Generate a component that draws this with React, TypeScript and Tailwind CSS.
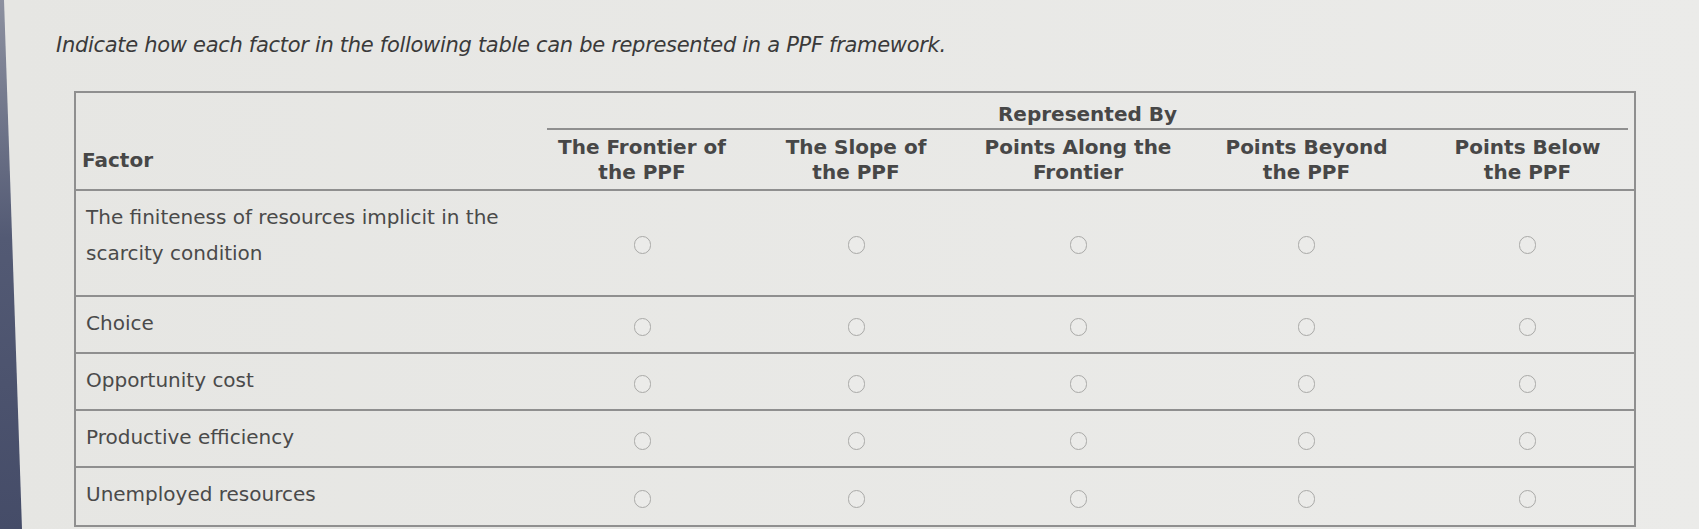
import React from "react";

const cols = [
  ["The Frontier of", "the PPF"],
  ["The Slope of", "the PPF"],
  ["Points Along the", "Frontier"],
  ["Points Beyond", "the PPF"],
  ["Points Below", "the PPF"],
];

const rows: { label: string[]; tall?: boolean }[] = [
  { label: ["The finiteness of resources implicit in the", "scarcity condition"], tall: true },
  { label: ["Choice"] },
  { label: ["Opportunity cost"] },
  { label: ["Productive efficiency"] },
  { label: ["Unemployed resources"] },
];

function Radio() {
  return (
    <span className="block w-[17px] h-[18px] rounded-full border-[1.5px] border-[#a9a9a7] bg-[#ebebe9]" />
  );
}

export default function App() {
  return (
    <div className="relative w-[1699px] h-[529px] overflow-hidden bg-gradient-to-r from-[#e6e6e3] to-[#ebebe9] flex font-['DejaVu_Sans','Liberation_Sans',sans-serif] text-[#474747]">
      <svg width="24" height="529" className="flex-none" viewBox="0 0 24 529">
        <defs>
          <linearGradient id="bz" x1="0" y1="0" x2="0" y2="1">
            <stop offset="0" stopColor="#8d91a0" />
            <stop offset="0.45" stopColor="#535a74" />
            <stop offset="1" stopColor="#454c68" />
          </linearGradient>
        </defs>
        <polygon points="0,0 4,0 22,529 0,529" fill="url(#bz)" />
      </svg>
      <div className="flex flex-col pl-[32px] pt-[32px]">
        <div className="italic text-[21px] leading-[26px] text-[#3a3a3a] tracking-[-0.3px]">
          Indicate how each factor in the following table can be represented in a PPF framework.
        </div>
        <div className="mt-[33px] ml-[18px] w-[1562px] border-2 border-[#8f8f8f]">
          <div className="grid grid-cols-[460px_212px_216px_228px_229px_213px] grid-rows-[37px_59px] border-b-2 border-[#8f8f8f]">
            <div className="col-start-2 col-span-5 row-start-1 ml-[11px] mr-[6px] border-b-2 border-[#8f8f8f] flex items-end justify-center pb-[1px]">
              <span className="font-bold text-[20px] leading-[26px]">Represented By</span>
            </div>
            <div className="col-start-1 row-start-2 flex items-center pl-[6px] font-bold text-[20px]">Factor</div>
            {cols.map((c, i) => (
              <div key={i} className="row-start-2 flex flex-col items-center justify-center text-center font-bold text-[20px] leading-[25px]">
                <span>{c[0]}</span>
                <span>{c[1]}</span>
              </div>
            ))}
          </div>
          {rows.map((r, ri) => (
            <div
              key={ri}
              className={
                "grid grid-cols-[460px_212px_216px_228px_229px_213px] " +
                (r.tall ? "h-[106px] " : "h-[57px] ") +
                (ri < rows.length - 1 ? "border-b-2 border-[#8f8f8f]" : "")
              }
            >
              <div className="pl-[10px] pt-[8px] text-[20px] leading-[36px] text-[#4a4a4a]">
                {r.label.map((l, li) => (
                  <div key={li}>{l}</div>
                ))}
              </div>
              {cols.map((_, ci) => (
                <div key={ci} className="flex items-center justify-center pt-[4px]">
                  <Radio />
                </div>
              ))}
            </div>
          ))}
        </div>
      </div>
    </div>
  );
}
